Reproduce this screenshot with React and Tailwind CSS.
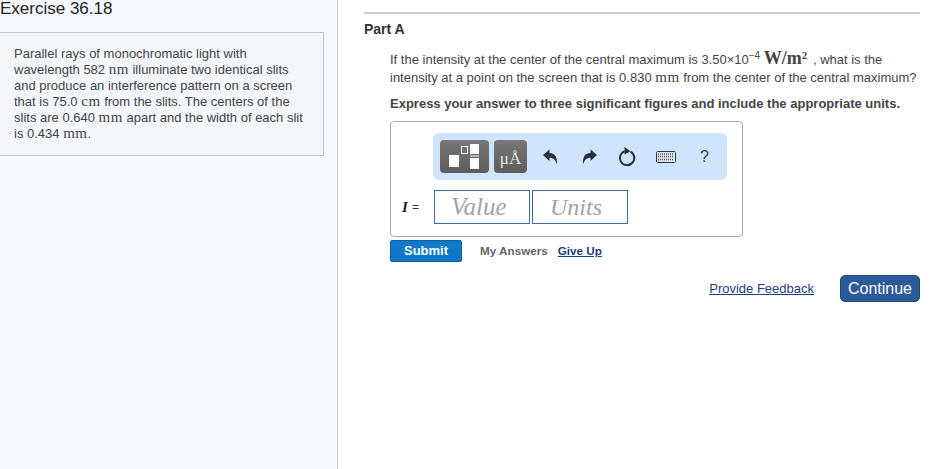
// App.jsx
const SANS = "font-['Liberation_Sans',Arial,sans-serif]";
const MATH = "font-['Liberation_Serif',serif]";

// unidad con apariencia de fuente matematica
function Unit({ children }) {
  return <span className={`${MATH} text-[15px] leading-none tracking-[0.5px]`}>{children}</span>;
}

function PanelIzquierdo() {
  return (
    <div className="w-[338px] shrink-0 bg-[#f5f9ff] border-r border-[#c5d0dc] min-h-[469px]">
      <h1 className="text-[17px] leading-[18px] text-[#222] font-normal">Exercise 36.18</h1>
      <div className="mt-[14px] w-[324px] h-[124px] border border-[#bccad8] border-l-0 pl-[14px] pr-2 pt-[13px] bg-[#f3f7fc] text-[13px] leading-[16px] text-[#444]">
        Parallel rays of monochromatic light with
        <br />
        wavelength 582 <Unit>nm</Unit> illuminate two identical slits
        <br />
        and produce an interference pattern on a screen
        <br />
        that is 75.0 <Unit>cm</Unit> from the slits. The centers of the
        <br />
        slits are 0.640 <Unit>mm</Unit> apart and the width of each slit
        <br />
        is 0.434 <Unit>mm</Unit>.
      </div>
    </div>
  );
}

function IconoPlantilla() {
  return (
    <svg width="31" height="25" viewBox="0 0 31 25" fill="white">
      <rect x="0" y="11" width="10" height="12" />
      <path d="M12 2h7v8h-7z M13 3v6h5V3z" fillRule="evenodd" />
      <rect x="21" y="0" width="9" height="10" />
      <rect x="21" y="11.5" width="9" height="1" />
      <rect x="21" y="14" width="9" height="11" />
    </svg>
  );
}

function Undo() {
  return (
    <svg width="15" height="16" viewBox="0 0 15 16" fill="#2b3038">
      <path d="M0 6 L6.5 0.5 V4 C11.5 4 14.5 7.5 14 15.5 C12.5 11 10.5 8.8 6.5 8.8 V12 Z" />
    </svg>
  );
}

function Redo() {
  return (
    <svg width="15" height="16" viewBox="0 0 15 16" fill="#2b3038">
      <path d="M15 6 L8.5 0.5 V4 C3.5 4 0.5 7.5 1 15.5 C2.5 11 4.5 8.8 8.5 8.8 V12 Z" />
    </svg>
  );
}

function Reset() {
  return (
    <svg width="18" height="20" viewBox="0 0 18 20" fill="none">
      <path d="M6.5 4.2 A7.2 7.2 0 1 0 12.5 4.6" stroke="#2b3038" strokeWidth="2" />
      <path d="M6.5 0 L12.5 4.2 L6.5 7.6 Z" fill="#2b3038" />
    </svg>
  );
}

function Teclado() {
  return (
    <svg width="20" height="12" viewBox="0 0 20 12">
      <rect x="0.5" y="0.5" width="19" height="11" rx="1" fill="#dfe6ee" stroke="#30363e" />
      <path d="M2 3h16M2 5.5h16" stroke="#555" strokeWidth="1.4" strokeDasharray="1 1" />
      <path d="M2 8.5h16" stroke="#555" strokeWidth="1.4" strokeDasharray="1 1" />
    </svg>
  );
}

function BarraHerramientas() {
  return (
    <div className="ml-[42px] w-[294px] h-[47px] bg-[#cfe4fd] rounded-[6px] flex items-center pl-[7px]">
      <div className="w-[49px] h-[33px] rounded-[4px] bg-gradient-to-b from-[#797676] to-[#5f5c5c] flex items-center justify-center">
        <IconoPlantilla />
      </div>
      <div className={`ml-[5px] w-[33px] h-[33px] rounded-[4px] bg-gradient-to-b from-[#797676] to-[#5f5c5c] flex items-center justify-center text-[#e8e8e8] text-[17px] pt-1 ${MATH}`}>
        μÅ
      </div>
      <div className="flex items-center">
        <div className="ml-[16px] flex"><Undo /></div>
        <div className="ml-[24px] flex"><Redo /></div>
        <div className="ml-[21px] flex"><Reset /></div>
        <div className="ml-[20px] flex"><Teclado /></div>
        <div className="ml-[24px] text-[16px] text-[#3a3f46]">?</div>
      </div>
    </div>
  );
}

function CajaRespuesta() {
  return (
    <div className="mt-[9px] ml-[26px] w-[353px] h-[116px] border border-[#aaa] rounded-[4px] pt-[11px]">
      <BarraHerramientas />
      <div className="flex items-center mt-[10px] ml-[11px]">
        <span className={`${MATH} italic font-bold text-[15px] w-[10px] text-[#222]`}>I</span>
        <span className="text-[12px] text-[#333] w-[22px]">=</span>
        <div className={`w-[96px] h-[34px] border border-[#3d6aa5] pl-[16px] text-[25px] leading-[32px] italic text-[#a3a3a3] ${MATH}`}>Value</div>
        <div className={`ml-[2px] w-[96px] h-[34px] border border-[#3d6aa5] pl-[17px] text-[24px] leading-[32px] italic text-[#a3a3a3] ${MATH}`}>Units</div>
      </div>
    </div>
  );
}

function PanelDerecho() {
  return (
    <div className="w-[556px] ml-[26px] pt-3">
      <div className="h-[2px] bg-[#ccc]" />
      <h2 className="mt-[8px] text-[14px] leading-[15px] font-bold text-[#333]">Part A</h2>
      <div className="mt-[12px] ml-[26px] text-[13px] leading-[18px] text-[#444] whitespace-nowrap">
        <p className="h-[20px]">
          If the intensity at the center of the central maximum is 3.50×10<sup className="text-[10px] leading-none">−4</sup>{" "}
          <span className={`${MATH} text-[18px] leading-none font-bold`}>W/m<sup className="text-[11px] leading-none">2</sup></span>{" "}
          <span className="ml-[2px]">, what is the</span>
        </p>
        <p>intensity at a point on the screen that is 0.830 <Unit>mm</Unit> from the center of the central maximum?</p>
      </div>
      <p className="mt-[9px] ml-[26px] text-[13px] leading-[16px] font-bold text-[#444]">
        Express your answer to three significant figures and include the appropriate units.
      </p>
      <CajaRespuesta />
      <div className="flex items-center mt-[3px] ml-[26px]">
        <button className="w-[72px] h-[22px] bg-[#0f78c8] border border-[#0d5fa0] rounded-[2px] text-white text-[13px] font-bold">Submit</button>
        <span className="ml-[18px] text-[11.7px] font-bold text-[#666]">My Answers</span>
        <a className="ml-[10px] text-[11.7px] font-bold text-[#173f86] underline">Give Up</a>
      </div>
      <div className="flex items-center justify-end mt-[13px]">
        <a className="text-[13px] text-[#1d4280] underline">Provide Feedback</a>
        <button className="ml-[26px] w-[80px] h-[27px] bg-[#2a5a98] border border-[#1f4a80] rounded-[5px] text-white text-[16px]">Continue</button>
      </div>
    </div>
  );
}

export default function App() {
  return (
    <div className={`flex w-[932px] h-[469px] overflow-hidden bg-white ${SANS}`}>
      <PanelIzquierdo />
      <PanelDerecho />
    </div>
  );
}
